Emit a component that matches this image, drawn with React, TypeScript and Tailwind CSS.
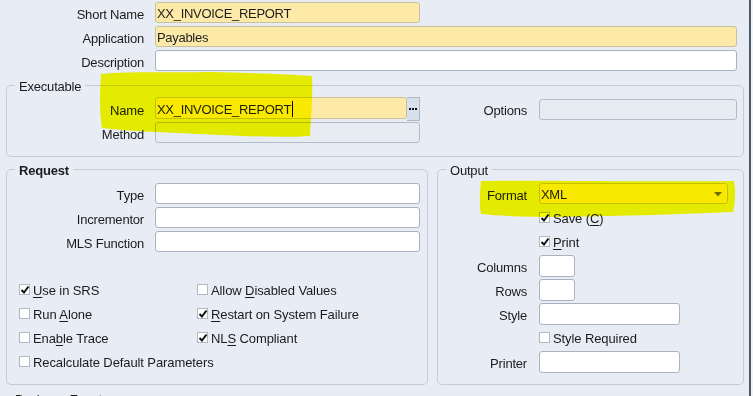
import React from 'react';

type Tone = 'yellow' | 'white' | 'disabled';

const toneClass: Record<Tone, string> = {
  yellow: 'bg-[#fdeaa8] border-[#c9c19a]',
  white: 'bg-white border-[#a9b2be]',
  disabled: 'bg-[#e7ecf3] border-[#b3bbc6]',
};

function Input({ value, tone = 'white', width, height = 'h-[21px]', children }: { value?: string; tone?: Tone; width: string; height?: string; children?: React.ReactNode }) {
  return (
    <div className={`${width} ${height} ${toneClass[tone]} relative flex items-center overflow-hidden whitespace-nowrap rounded-[3px] border pl-[1px] pt-[2px] tracking-[-0.3px] text-[#1e1e1e]`}>
      {value}
      {children}
    </div>
  );
}

function Label({ width, children, bold }: { width: string; children?: React.ReactNode; bold?: boolean }) {
  return <div className={`${width} shrink-0 pt-[3px] text-right ${bold ? 'font-bold' : ''}`}>{children}</div>;
}

function Checkbox({ checked, children }: { checked?: boolean; children: React.ReactNode }) {
  return (
    <div className="flex items-center gap-[3px]">
      <div className="relative h-[11px] w-[11px] border border-[#b0b8c2] bg-white">
        {checked && (
          <svg className="absolute left-[0px] top-[0px]" width="10" height="10" viewBox="0 0 10 10">
            <polyline points="1.5,5 4,7.5 8.5,1.5" fill="none" stroke="#111" strokeWidth="2" />
          </svg>
        )}
      </div>
      <span className="pt-[2px] tracking-[-0.1px]">{children}</span>
    </div>
  );
}

function U({ children }: { children: React.ReactNode }) {
  return <span className="underline underline-offset-[2px]">{children}</span>;
}

function Legend({ children, bold }: { children: React.ReactNode; bold?: boolean }) {
  return (
    <legend className={`ml-[8px] px-[4px] leading-[15px] ${bold ? 'font-bold' : ''}`}>
      <span className="inline-block translate-y-[1px]">{children}</span>
    </legend>
  );
}

function TopRow({ label, children }: { label: string; children: React.ReactNode }) {
  return (
    <div className="flex h-[21px] items-center">
      <Label width="w-[144px]">{label}</Label>
      <div className="ml-[11px]">{children}</div>
    </div>
  );
}

function ReqRow({ label, children }: { label?: string; children?: React.ReactNode }) {
  return (
    <div className="flex h-[21px] items-center">
      <Label width="w-[137px]">{label}</Label>
      <div className="ml-[11px]">{children}</div>
    </div>
  );
}

function OutRow({ label, children }: { label?: string; children: React.ReactNode }) {
  return (
    <div className="flex h-[21px] items-center">
      <Label width="w-[89px]">{label}</Label>
      <div className="ml-[12px]">{children}</div>
    </div>
  );
}

export default function App() {
  return (
    <div className="relative flex h-[396px] w-[753px] overflow-hidden bg-[#e8edf5] font-['Liberation_Sans',Arial,sans-serif] text-[13px] leading-[15px] tracking-[-0.2px] text-[#1b1b1b]">
      <div className="w-[749px] shrink-0">
        <div className="flex flex-col gap-[3px] pt-[2px]">
          <TopRow label="Short Name">
            <Input tone="yellow" width="w-[265px]" value="XX_INVOICE_REPORT" />
          </TopRow>
          <TopRow label="Application">
            <Input tone="yellow" width="w-[582px]" value="Payables" />
          </TopRow>
          <TopRow label="Description">
            <Input width="w-[582px]" />
          </TopRow>
        </div>

        <fieldset className="ml-[6px] mt-[7px] w-[738px] rounded-[5px] border border-[#c5ccd6] pb-[13px] pt-[5px]">
          <Legend>Executable</Legend>
          <div className="flex flex-col gap-[2px]">
            <div className="flex h-[22px] items-center">
              <Label width="w-[137px]">Name</Label>
              <div className="ml-[11px] flex">
                <Input tone="yellow" width="w-[252px]" height="h-[22px]" value="XX_INVOICE_REPORT">
                  <span className="ml-[1px] h-[16px] w-[1px] bg-black" />
                </Input>
                <div className="flex h-[24px] w-[13px] items-center justify-center gap-[1px] border border-l-0 border-[#aeb8c5] bg-[#d7e1ed]">
                  <span className="h-[2px] w-[2px] bg-[#111]" />
                  <span className="h-[2px] w-[2px] bg-[#111]" />
                  <span className="h-[2px] w-[2px] bg-[#111]" />
                </div>
              </div>
              <Label width="w-[107px]">Options</Label>
              <div className="ml-[12px]">
                <Input tone="disabled" width="w-[198px]" />
              </div>
            </div>
            <div className="flex h-[21px] items-center">
              <Label width="w-[137px]">Method</Label>
              <div className="ml-[11px]">
                <Input tone="disabled" width="w-[265px]" />
              </div>
            </div>
          </div>
        </fieldset>

        <div className="mt-[5px] flex">
          <fieldset className="ml-[6px] w-[422px] rounded-[5px] border border-[#c5ccd6] pb-[12px] pt-[6px]">
            <Legend bold>Request</Legend>
            <div className="flex flex-col gap-[3px]">
              <ReqRow label="Type"><Input width="w-[265px]" /></ReqRow>
              <ReqRow label="Incrementor"><Input width="w-[265px]" /></ReqRow>
              <ReqRow label="MLS Function"><Input width="w-[265px]" /></ReqRow>
              <div className="h-[21px]" />
              <div className="flex h-[21px] items-center pl-[12px]">
                <div className="w-[178px]"><Checkbox checked><U>U</U>se in SRS</Checkbox></div>
                <Checkbox>Allow <U>D</U>isabled Values</Checkbox>
              </div>
              <div className="flex h-[21px] items-center pl-[12px]">
                <div className="w-[178px]"><Checkbox>Run <U>A</U>lone</Checkbox></div>
                <Checkbox checked><U>R</U>estart on System Failure</Checkbox>
              </div>
              <div className="flex h-[21px] items-center pl-[12px]">
                <div className="w-[178px]"><Checkbox>Ena<U>b</U>le Trace</Checkbox></div>
                <Checkbox checked>NL<U>S</U> Compliant</Checkbox>
              </div>
              <div className="flex h-[21px] items-center pl-[12px]">
                <Checkbox>Recalculate Default Parameters</Checkbox>
              </div>
            </div>
          </fieldset>

          <fieldset className="ml-[9px] w-[307px] rounded-[5px] border border-[#c5ccd6] pb-[12px] pt-[6px]">
            <Legend>Output</Legend>
            <div className="flex flex-col gap-[3px]">
              <OutRow label="Format">
                <Input tone="yellow" width="w-[189px]" value="XML">
                  <svg className="absolute right-[5px] top-[8px]" width="8" height="5" viewBox="0 0 8 5">
                    <polygon points="0,0 8,0 4,4.5" fill="#6f6c52" />
                  </svg>
                </Input>
              </OutRow>
              <OutRow><Checkbox checked>Save (<U>C</U>)</Checkbox></OutRow>
              <OutRow><Checkbox checked><U>P</U>rint</Checkbox></OutRow>
              <OutRow label="Columns"><Input width="w-[36px]" height="h-[22px]" /></OutRow>
              <OutRow label="Rows"><Input width="w-[36px]" height="h-[22px]" /></OutRow>
              <OutRow label="Style"><Input width="w-[141px]" height="h-[22px]" /></OutRow>
              <OutRow><Checkbox>Style Required</Checkbox></OutRow>
              <OutRow label="Printer"><Input width="w-[141px]" height="h-[22px]" /></OutRow>
            </div>
          </fieldset>
        </div>

        <div className="mt-[5px] pl-[15px] pt-[2px]">Business Events</div>
      </div>
      <div className="w-[2px] shrink-0 bg-[#4b596c]" />
      <div className="flex-1 bg-[#f2f4f8]" />

      {/* highlighter marks */}
      <svg className="pointer-events-none absolute left-0 top-0 mix-blend-multiply" width="753" height="396" viewBox="0 0 753 396">
        <path
          d="M101,74 C130,71 170,73 210,72 C250,73 285,74 312,76 C313,95 311,115 310,136 C280,138 240,136 200,134 C160,132 125,131 102,128 C99,110 100,90 101,74 Z"
          fill="#fbfd00"
        />
        <path
          d="M481,181 C540,180 640,182 734,181 C736,192 735,203 733,212 C690,214 620,216 560,217 C530,217 500,216 481,214 C479,203 480,191 481,181 Z"
          fill="#fbfd00"
        />
      </svg>
    </div>
  );
}
